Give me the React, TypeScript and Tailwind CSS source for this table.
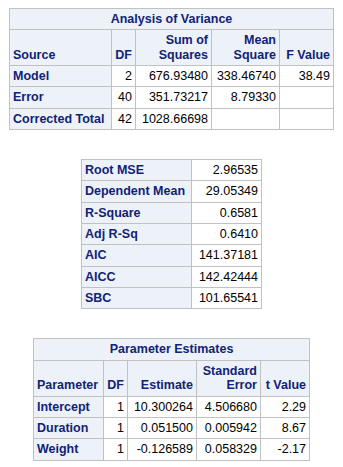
import React from "react";

const th =
  "border border-[#c1c1c1] bg-[#edf2f9] text-[#112277] font-bold px-[3px] py-[3px] align-bottom whitespace-nowrap";
const td =
  "border border-[#c1c1c1] bg-white text-black font-normal px-[3px] py-[3px] text-right whitespace-nowrap";

function Table({
  title,
  widths,
  headers,
  rows,
}: {
  title: string;
  widths: number[];
  headers: React.ReactNode[];
  rows: string[][];
}) {
  const total = widths.reduce((a, b) => a + b, 0);
  return (
    <table
      className="border-collapse table-fixed border border-[#c1c1c1]"
      style={{ width: total }}
    >
      <colgroup>
        {widths.map((w, i) => (
          <col key={i} style={{ width: w }} />
        ))}
      </colgroup>
      <thead>
        <tr>
          <th colSpan={widths.length} className={th + " text-center align-middle"}>
            {title}
          </th>
        </tr>
        <tr>
          {headers.map((h, i) => (
            <th key={i} className={th + (i === 0 ? " text-left" : " text-right")}>
              {h}
            </th>
          ))}
        </tr>
      </thead>
      <tbody>
        {rows.map((r, i) => (
          <tr key={i}>
            {r.map((c, j) =>
              j === 0 ? (
                <th key={j} className={th + " text-left align-middle"}>
                  {c}
                </th>
              ) : (
                <td key={j} className={td}>
                  {c}
                </td>
              )
            )}
          </tr>
        ))}
      </tbody>
    </table>
  );
}

export default function App() {
  const fit: [string, string][] = [
    ["Root MSE", "2.96535"],
    ["Dependent Mean", "29.05349"],
    ["R-Square", "0.6581"],
    ["Adj R-Sq", "0.6410"],
    ["AIC", "141.37181"],
    ["AICC", "142.42444"],
    ["SBC", "101.65541"],
  ];
  return (
    <div className="w-[343px] h-[467px] bg-white flex flex-col items-center pt-[8px] gap-[29px] font-['Liberation_Sans',Arial,sans-serif] text-[12.5px] leading-[14.35px]">
      <Table
        title="Analysis of Variance"
        widths={[102, 24, 76, 68, 54]}
        headers={[
          "Source",
          "DF",
          <>
            Sum of
            <br />
            Squares
          </>,
          <>
            Mean
            <br />
            Square
          </>,
          "F Value",
        ]}
        rows={[
          ["Model", "2", "676.93480", "338.46740", "38.49"],
          ["Error", "40", "351.73217", "8.79330", ""],
          ["Corrected Total", "42", "1028.66698", "", ""],
        ]}
      />
      <table className="border-collapse table-fixed border border-[#c1c1c1] w-[180px]">
        <colgroup>
          <col style={{ width: 110 }} />
          <col style={{ width: 70 }} />
        </colgroup>
        <tbody>
          {fit.map(([k, v]) => (
            <tr key={k}>
              <th className={th + " text-left align-middle"}>{k}</th>
              <td className={td}>{v}</td>
            </tr>
          ))}
        </tbody>
      </table>
      <Table
        title="Parameter Estimates"
        widths={[70, 24, 69, 64, 49]}
        headers={[
          "Parameter",
          "DF",
          "Estimate",
          <>
            Standard
            <br />
            Error
          </>,
          "t Value",
        ]}
        rows={[
          ["Intercept", "1", "10.300264", "4.506680", "2.29"],
          ["Duration", "1", "0.051500", "0.005942", "8.67"],
          ["Weight", "1", "-0.126589", "0.058329", "-2.17"],
        ]}
      />
    </div>
  );
}
